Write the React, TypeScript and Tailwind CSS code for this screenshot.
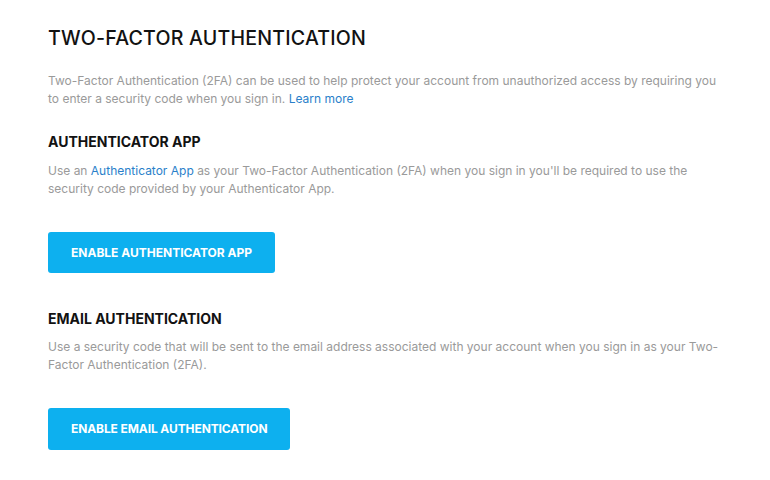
export default function App() {
  const font = { fontFamily: 'Inter, "Noto Sans", sans-serif' };
  return (
    <div className="w-[770px] h-[480px] bg-white" style={font}>
      <div className="pl-[48px] pt-[26px] w-[728px]">
        <h1 className="text-[19.6px] leading-[24px] font-medium text-[#121212] tracking-[0.2px]">
          TWO-FACTOR AUTHENTICATION
        </h1>
        <p className="mt-[22px] text-[12px] leading-[18px] text-[#9a9a9a]">
          Two-Factor Authentication (2FA) can be used to help protect your account from unauthorized access by requiring you to enter a security code when you sign in.{' '}
          <a className="text-[#2a7fca]">Learn more</a>
        </p>
        <h2 className="mt-[24px] text-[14px] leading-[20px] font-bold text-[#121212]">AUTHENTICATOR APP</h2>
        <p className="mt-[10px] text-[12px] leading-[18px] text-[#9a9a9a]">
          Use an <a className="text-[#2a7fca]">Authenticator App</a> as your Two-Factor Authentication (2FA) when you sign in you'll be required to use the security code provided by your Authenticator App.
        </p>
        <button className="mt-[34px] h-[41px] px-[23px] rounded-[3px] bg-[#0db0ef] text-white text-[12px] font-bold">
          ENABLE AUTHENTICATOR APP
        </button>
        <h2 className="mt-[36px] text-[14px] leading-[20px] font-bold text-[#121212]">EMAIL AUTHENTICATION</h2>
        <p className="mt-[9px] text-[12px] leading-[18px] text-[#9a9a9a]">
          Use a security code that will be sent to the email address associated with your account when you sign in as your Two-Factor Authentication (2FA).
        </p>
        <button className="mt-[34px] h-[42px] px-[23px] rounded-[3px] bg-[#0db0ef] text-white text-[12px] font-bold tracking-[-0.1px]">
          ENABLE EMAIL AUTHENTICATION
        </button>
      </div>
    </div>
  );
}
